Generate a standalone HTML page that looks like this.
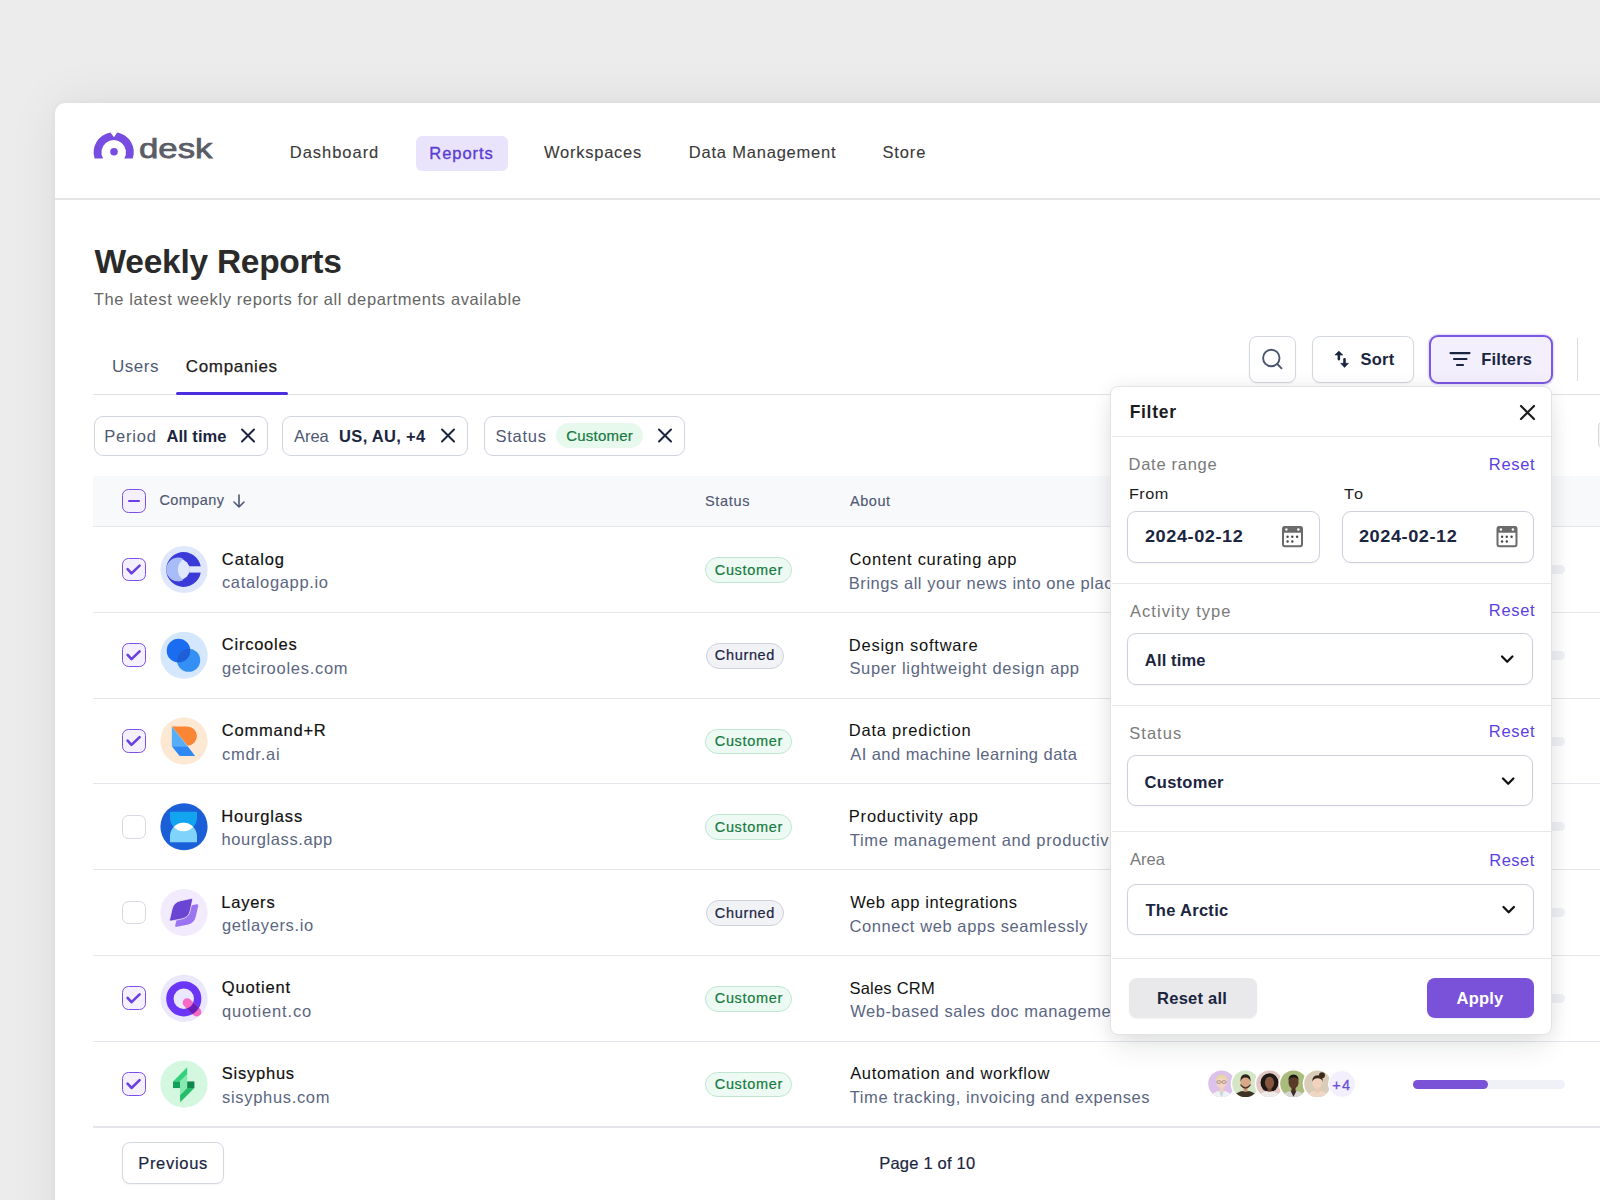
<!DOCTYPE html>
<html><head><meta charset="utf-8"><title>desk - Weekly Reports</title>
<style>
html,body{margin:0;padding:0;}
body{width:1600px;height:1200px;overflow:hidden;position:relative;background:#ececec;font-family:"Liberation Sans",sans-serif;}
.t{position:absolute;white-space:nowrap;font-family:"Liberation Sans",sans-serif;}
.r{position:absolute;display:block;}
</style></head><body>
<div class="r" style="left:55px;top:103px;width:1600px;height:1200px;background:#fff;border-top-left-radius:10px;box-shadow:0 0 50px rgba(0,0,0,0.075),0 0 6px rgba(0,0,0,0.04);"></div>
<div class="r" style="left:55px;top:198.3px;width:1545px;height:1.8px;background:#e5e5e5;"></div>
<svg class="r" style="left:92px;top:129px;overflow:visible;" width="45" height="33" viewBox="0 0 45 33"><g transform="translate(0.000,0.000)"><path d="M2.61,29.6 A20.1,20.1 0 0 1 18.4,3.47 L22,8.3 L25.3,3.52 A20.1,20.1 0 0 1 40.79,29.6 L32.26,29.6 A12.3,12.3 0 1 0 11.14,29.6 Z" fill="#774ce0"/><circle cx="22" cy="22.7" r="3.8" fill="#774ce0"/></g></svg>
<div class="t" style="left:139.07px;top:134.77px;font-size:27.8px;line-height:27.8px;font-weight:400;color:#5a5d66;letter-spacing:0.000px;transform:scaleX(1.25);transform-origin:0 0;-webkit-text-stroke:0.75px #5a5d66;">desk</div>
<div class="t" style="left:289.82px;top:144.03px;font-size:16.5px;line-height:16.5px;font-weight:400;color:#3a3a3a;letter-spacing:0.969px;-webkit-text-stroke:0.1px #3a3a3a;">Dashboard</div>
<div class="r" style="left:416px;top:136px;width:92px;height:35px;background:#e9e4fb;border-radius:6px;"></div>
<div class="t" style="left:429.32px;top:144.73px;font-size:16.5px;line-height:16.5px;font-weight:400;color:#5a3cd4;letter-spacing:0.958px;-webkit-text-stroke:0.35px #5a3cd4;">Reports</div>
<div class="t" style="left:544.10px;top:144.03px;font-size:16.5px;line-height:16.5px;font-weight:400;color:#3a3a3a;letter-spacing:0.747px;-webkit-text-stroke:0.1px #3a3a3a;">Workspaces</div>
<div class="t" style="left:688.83px;top:144.03px;font-size:16.5px;line-height:16.5px;font-weight:400;color:#3a3a3a;letter-spacing:0.789px;-webkit-text-stroke:0.1px #3a3a3a;">Data Management</div>
<div class="t" style="left:882.45px;top:144.03px;font-size:16.5px;line-height:16.5px;font-weight:400;color:#3a3a3a;letter-spacing:0.875px;-webkit-text-stroke:0.1px #3a3a3a;">Store</div>
<div class="t" style="left:94.60px;top:244.84px;font-size:33.5px;line-height:33.5px;font-weight:700;color:#2a2a2a;letter-spacing:-0.267px;">Weekly Reports</div>
<div class="t" style="left:93.83px;top:291.43px;font-size:16.5px;line-height:16.5px;font-weight:400;color:#666666;letter-spacing:0.605px;">The latest weekly reports for all departments available</div>
<div class="r" style="left:93px;top:394px;width:1507px;height:1px;background:#dfe1e7;"></div>
<div class="t" style="left:111.95px;top:358.21px;font-size:17px;line-height:17px;font-weight:400;color:#4f5a75;letter-spacing:0.550px;">Users</div>
<div class="t" style="left:185.82px;top:358.21px;font-size:17px;line-height:17px;font-weight:400;color:#1c1c1c;letter-spacing:0.662px;-webkit-text-stroke:0.25px #1c1c1c;">Companies</div>
<div class="r" style="left:176.4px;top:392.2px;width:112px;height:3px;background:#4a2ee0;border-radius:2px;"></div>
<div class="r" style="left:1248.5px;top:336px;width:47px;height:46.5px;background:#fff;border:1px solid #d3d7e0;border-radius:8px;box-sizing:border-box;box-shadow:0 1px 2px rgba(16,24,40,0.05);"></div>
<svg class="r" style="left:1260px;top:347px;overflow:visible;" width="25" height="25" viewBox="0 0 25 25"><g transform="translate(0.000,0.000)"><circle cx="11.3" cy="11" r="8.2" fill="none" stroke="#4a5570" stroke-width="1.9"/><path d="M17.3,17 L21.5,21.3" stroke="#4a5570" stroke-width="1.9" stroke-linecap="round"/></g></svg>
<div class="r" style="left:1312px;top:336px;width:101.5px;height:46.5px;background:#fff;border:1px solid #d3d7e0;border-radius:8px;box-sizing:border-box;box-shadow:0 1px 2px rgba(16,24,40,0.05);"></div>
<svg class="r" style="left:1333px;top:349px;overflow:visible;" width="19" height="21" viewBox="0 0 19 21"><g transform="translate(0.000,0.000)"><g fill="#1b2540"><path d="M5.85,2.1 L1.9,6 L9.8,6 Z" stroke="#1b2540" stroke-width="0.6" stroke-linejoin="round"/><rect x="4.6" y="5" width="2.5" height="6.4" rx="1.1"/><rect x="10.2" y="9" width="2.6" height="6" rx="1.1"/><path d="M7.7,14.3 L15.5,14.3 L11.5,18.4 Z" stroke="#1b2540" stroke-width="0.6" stroke-linejoin="round"/></g></g></svg>
<div class="t" style="left:1360.50px;top:351.03px;font-size:16.5px;line-height:16.5px;font-weight:700;color:#1b2540;letter-spacing:0.242px;">Sort</div>
<div class="r" style="left:1428.5px;top:334.5px;width:124px;height:49px;background:#f3effd;border:2px solid #7a58e2;border-radius:9px;box-sizing:border-box;box-shadow:0 0 0 1.5px #ece6fc;"></div>
<svg class="r" style="left:1448px;top:350px;overflow:visible;" width="25" height="19" viewBox="0 0 25 19"><g transform="translate(0.000,0.000)"><path d="M2.5,3.1 H21.5 M6,9 H18.5 M9,15 H15" stroke="#1b2540" stroke-width="2.2" stroke-linecap="round"/></g></svg>
<div class="t" style="left:1481.28px;top:351.03px;font-size:16.5px;line-height:16.5px;font-weight:700;color:#1b2540;letter-spacing:0.208px;">Filters</div>
<div class="r" style="left:1577px;top:338px;width:1px;height:43px;background:#dcdcdc;"></div>
<div class="r" style="left:93.5px;top:415.5px;width:174px;height:40px;background:#fff;border:1px solid #cfd4df;border-radius:9px;box-sizing:border-box;"></div>
<div class="t" style="left:104.22px;top:427.53px;font-size:16.5px;line-height:16.5px;font-weight:400;color:#4f5872;letter-spacing:0.790px;">Period</div>
<div class="t" style="left:166.43px;top:427.53px;font-size:16.5px;line-height:16.5px;font-weight:700;color:#1b2540;letter-spacing:0.068px;">All time</div>
<svg class="r" style="left:241px;top:428px;overflow:visible;" width="15" height="15" viewBox="0 0 15 15"><g transform="translate(0.000,0.500)"><path d="M1,1 L13,13 M13,1 L1,13" stroke="#1b2540" stroke-width="2" stroke-linecap="round"/></g></svg>
<div class="r" style="left:281.5px;top:415.5px;width:186.5px;height:40px;background:#fff;border:1px solid #cfd4df;border-radius:9px;box-sizing:border-box;"></div>
<div class="t" style="left:293.90px;top:427.53px;font-size:16.5px;line-height:16.5px;font-weight:400;color:#4f5872;letter-spacing:0.008px;">Area</div>
<div class="t" style="left:339.10px;top:427.53px;font-size:16.5px;line-height:16.5px;font-weight:700;color:#1b2540;letter-spacing:0.306px;">US, AU, +4</div>
<svg class="r" style="left:441px;top:428px;overflow:visible;" width="15" height="15" viewBox="0 0 15 15"><g transform="translate(0.000,0.500)"><path d="M1,1 L13,13 M13,1 L1,13" stroke="#1b2540" stroke-width="2" stroke-linecap="round"/></g></svg>
<div class="r" style="left:484px;top:415.5px;width:200.5px;height:40px;background:#fff;border:1px solid #cfd4df;border-radius:9px;box-sizing:border-box;"></div>
<div class="t" style="left:495.55px;top:427.53px;font-size:16.5px;line-height:16.5px;font-weight:400;color:#4f5872;letter-spacing:0.725px;">Status</div>
<div class="r" style="left:556.4px;top:422.8px;width:86.6px;height:25.5px;background:#e7f8ed;border-radius:13px;"></div>
<div class="t" style="left:566.15px;top:427.80px;font-size:15px;line-height:15px;font-weight:400;color:#167a3e;letter-spacing:0.229px;-webkit-text-stroke:0.2px #167a3e;">Customer</div>
<svg class="r" style="left:658px;top:428px;overflow:visible;" width="15" height="15" viewBox="0 0 15 15"><g transform="translate(0.000,0.500)"><path d="M1,1 L13,13 M13,1 L1,13" stroke="#1b2540" stroke-width="2" stroke-linecap="round"/></g></svg>
<div class="r" style="left:93px;top:476px;width:1507px;height:50px;background:#f8f9fb;"></div>
<div class="r" style="left:93px;top:526.1px;width:1507px;height:1px;background:#e4e6eb;"></div>
<div class="r" style="left:122px;top:489.2px;width:23.8px;height:23.8px;background:#f4f0fe;border:1.8px solid #7b4ee6;border-radius:6.5px;box-sizing:border-box;"></div>
<div class="r" style="left:127.8px;top:500px;width:12px;height:2.3px;background:#6a3fe0;border-radius:1.2px;"></div>
<div class="t" style="left:159.45px;top:493.43px;font-size:14.5px;line-height:14.5px;font-weight:400;color:#4f5872;letter-spacing:0.425px;-webkit-text-stroke:0.15px #4f5872;">Company</div>
<svg class="r" style="left:231px;top:493px;overflow:visible;" width="17" height="17" viewBox="0 0 17 17"><g transform="translate(0.000,0.000)"><path d="M8,2 V14 M3,9 L8,14 L13,9" fill="none" stroke="#4f5872" stroke-width="1.6" stroke-linecap="round" stroke-linejoin="round"/></g></svg>
<div class="t" style="left:704.98px;top:493.73px;font-size:14.5px;line-height:14.5px;font-weight:400;color:#4f5872;letter-spacing:0.680px;-webkit-text-stroke:0.15px #4f5872;">Status</div>
<div class="t" style="left:850.00px;top:493.73px;font-size:14.5px;line-height:14.5px;font-weight:400;color:#4f5872;letter-spacing:0.531px;-webkit-text-stroke:0.15px #4f5872;">About</div>
<div class="r" style="left:93px;top:611.86px;width:1507px;height:1px;background:#e4e6eb;"></div>
<div class="r" style="left:122px;top:557.58px;width:23.8px;height:23.8px;background:#f4f0fe;border:1.8px solid #7b4ee6;border-radius:6.5px;box-sizing:border-box;"></div>
<svg class="r" style="left:122px;top:557px;overflow:visible;" width="25" height="25" viewBox="0 0 25 25"><g transform="translate(0.000,0.580)"><path d="M5.6,11.6 L9.5,15.8 L17.6,8" fill="none" stroke="#6a3fe0" stroke-width="2.6" stroke-linecap="round" stroke-linejoin="round"/></g></svg>
<svg class="r" style="left:160px;top:545px;overflow:visible;" width="49" height="49" viewBox="0 0 49 49"><g transform="translate(0.000,0.480)"><circle cx="24" cy="24" r="23.6" fill="#dfe7fc"/><circle cx="23.6" cy="24" r="17.4" fill="#3a3ad8"/><circle cx="19.4" cy="24" r="10.4" fill="#dfe7fc"/><path d="M23.52,13.4 A11.9,11.9 0 1 0 23.52,34.6 A12.8,12.8 0 0 1 23.52,13.4 Z" fill="#a8bdf8"/><rect x="29.2" y="20.8" width="14" height="6.3" fill="#dfe7fc"/></g></svg>
<div class="t" style="left:221.85px;top:550.51px;font-size:16.5px;line-height:16.5px;font-weight:400;color:#111111;letter-spacing:0.879px;-webkit-text-stroke:0.2px #111;">Catalog</div>
<div class="t" style="left:221.97px;top:574.11px;font-size:16.5px;line-height:16.5px;font-weight:400;color:#5b6681;letter-spacing:0.652px;">catalogapp.io</div>
<div class="r" style="left:705.3px;top:557.18px;width:86.3px;height:25.6px;background:#edfaf3;border:1px solid #c0e6d2;border-radius:13px;box-sizing:border-box;"></div>
<div class="t" style="left:714.75px;top:562.51px;font-size:14.5px;line-height:14.5px;font-weight:400;color:#167a3e;letter-spacing:0.661px;-webkit-text-stroke:0.2px #167a3e;">Customer</div>
<div class="t" style="left:849.45px;top:550.91px;font-size:16.5px;line-height:16.5px;font-weight:400;color:#111111;letter-spacing:0.729px;">Content curating app</div>
<div class="t" style="left:848.83px;top:574.51px;font-size:16.5px;line-height:16.5px;font-weight:400;color:#5b6681;letter-spacing:0.539px;">Brings all your news into one place</div>
<div class="r" style="left:1413px;top:564.98px;width:152px;height:9px;background:#f0f1f6;border-radius:5px;"></div>
<div class="r" style="left:93px;top:697.62px;width:1507px;height:1px;background:#e4e6eb;"></div>
<div class="r" style="left:122px;top:643.34px;width:23.8px;height:23.8px;background:#f4f0fe;border:1.8px solid #7b4ee6;border-radius:6.5px;box-sizing:border-box;"></div>
<svg class="r" style="left:122px;top:643px;overflow:visible;" width="25" height="25" viewBox="0 0 25 25"><g transform="translate(0.000,0.340)"><path d="M5.6,11.6 L9.5,15.8 L17.6,8" fill="none" stroke="#6a3fe0" stroke-width="2.6" stroke-linecap="round" stroke-linejoin="round"/></g></svg>
<svg class="r" style="left:160px;top:631px;overflow:visible;" width="49" height="49" viewBox="0 0 49 49"><g transform="translate(0.000,0.240)"><circle cx="24" cy="24" r="23.6" fill="#d4e7fc"/><circle cx="18.5" cy="19.4" r="11.8" fill="#1a6cf0"/><circle cx="28.6" cy="29" r="11.6" fill="#3590f5"/><clipPath id="cc1"><circle cx="18.5" cy="19.4" r="11.8"/></clipPath><circle cx="28.6" cy="29" r="11.6" fill="#1e5ed8" clip-path="url(#cc1)"/></g></svg>
<div class="t" style="left:221.85px;top:636.27px;font-size:16.5px;line-height:16.5px;font-weight:400;color:#111111;letter-spacing:0.753px;-webkit-text-stroke:0.2px #111;">Circooles</div>
<div class="t" style="left:221.97px;top:659.87px;font-size:16.5px;line-height:16.5px;font-weight:400;color:#5b6681;letter-spacing:0.716px;">getcirooles.com</div>
<div class="r" style="left:705.5px;top:642.94px;width:78px;height:25.6px;background:#f1f2f6;border:1px solid #cfd2da;border-radius:13px;box-sizing:border-box;"></div>
<div class="t" style="left:714.85px;top:648.27px;font-size:14.5px;line-height:14.5px;font-weight:400;color:#1b2540;letter-spacing:0.654px;-webkit-text-stroke:0.2px #1b2540;">Churned</div>
<div class="t" style="left:848.83px;top:636.67px;font-size:16.5px;line-height:16.5px;font-weight:400;color:#111111;letter-spacing:0.754px;">Design software</div>
<div class="t" style="left:849.45px;top:660.27px;font-size:16.5px;line-height:16.5px;font-weight:400;color:#5b6681;letter-spacing:0.656px;">Super lightweight design app</div>
<div class="r" style="left:1413px;top:650.74px;width:152px;height:9px;background:#f0f1f6;border-radius:5px;"></div>
<div class="r" style="left:93px;top:783.38px;width:1507px;height:1px;background:#e4e6eb;"></div>
<div class="r" style="left:122px;top:729.1px;width:23.8px;height:23.8px;background:#f4f0fe;border:1.8px solid #7b4ee6;border-radius:6.5px;box-sizing:border-box;"></div>
<svg class="r" style="left:122px;top:729px;overflow:visible;" width="25" height="25" viewBox="0 0 25 25"><g transform="translate(0.000,0.100)"><path d="M5.6,11.6 L9.5,15.8 L17.6,8" fill="none" stroke="#6a3fe0" stroke-width="2.6" stroke-linecap="round" stroke-linejoin="round"/></g></svg>
<svg class="r" style="left:160px;top:717px;overflow:visible;" width="49" height="49" viewBox="0 0 49 49"><g transform="translate(0.000,0.000)"><circle cx="24" cy="24" r="23.6" fill="#fde8d3"/><path d="M11.8,9.4 L26.7,9.4 A9.7,9.7 0 0 1 27.7,28.8 Z" fill="#fa8535"/><path d="M11.8,9.4 L11.8,29.2 L27.7,29.2 Z" fill="#57aef8"/><path d="M11.8,29.2 L27.7,29.2 L35.1,39 L19.7,39 Z" fill="#2f89f5"/></g></svg>
<div class="t" style="left:221.85px;top:722.03px;font-size:16.5px;line-height:16.5px;font-weight:400;color:#111111;letter-spacing:0.784px;-webkit-text-stroke:0.2px #111;">Command+R</div>
<div class="t" style="left:221.97px;top:745.63px;font-size:16.5px;line-height:16.5px;font-weight:400;color:#5b6681;letter-spacing:0.733px;">cmdr.ai</div>
<div class="r" style="left:705.3px;top:728.7px;width:86.3px;height:25.6px;background:#edfaf3;border:1px solid #c0e6d2;border-radius:13px;box-sizing:border-box;"></div>
<div class="t" style="left:714.75px;top:734.03px;font-size:14.5px;line-height:14.5px;font-weight:400;color:#167a3e;letter-spacing:0.661px;-webkit-text-stroke:0.2px #167a3e;">Customer</div>
<div class="t" style="left:848.83px;top:722.43px;font-size:16.5px;line-height:16.5px;font-weight:400;color:#111111;letter-spacing:0.771px;">Data prediction</div>
<div class="t" style="left:850.20px;top:746.03px;font-size:16.5px;line-height:16.5px;font-weight:400;color:#5b6681;letter-spacing:0.450px;">AI and machine learning data</div>
<div class="r" style="left:1413px;top:736.5px;width:152px;height:9px;background:#f0f1f6;border-radius:5px;"></div>
<div class="r" style="left:93px;top:869.14px;width:1507px;height:1px;background:#e4e6eb;"></div>
<div class="r" style="left:122px;top:814.86px;width:23.8px;height:23.8px;background:#fff;border:1.5px solid #d5d8e0;border-radius:6.5px;box-sizing:border-box;"></div>
<svg class="r" style="left:160px;top:802px;overflow:visible;" width="49" height="49" viewBox="0 0 49 49"><g transform="translate(0.000,0.760)"><circle cx="24" cy="24" r="23.6" fill="#1b5fd8"/><path d="M10,9 H37 V15 A13.5,13.5 0 0 1 10,15 Z" fill="#13a4ef"/><path d="M10,39.4 V33.5 A13.5,13.5 0 0 1 37,33.5 V39.4 Z" fill="#80d4fb"/><path d="M13.67,24.25 A13.5,13.5 0 0 1 33.33,24.25 A13.5,13.5 0 0 1 13.67,24.25 Z" fill="#fff"/></g></svg>
<div class="t" style="left:221.22px;top:807.79px;font-size:16.5px;line-height:16.5px;font-weight:400;color:#111111;letter-spacing:0.831px;-webkit-text-stroke:0.2px #111;">Hourglass</div>
<div class="t" style="left:221.47px;top:831.39px;font-size:16.5px;line-height:16.5px;font-weight:400;color:#5b6681;letter-spacing:0.585px;">hourglass.app</div>
<div class="r" style="left:705.3px;top:814.46px;width:86.3px;height:25.6px;background:#edfaf3;border:1px solid #c0e6d2;border-radius:13px;box-sizing:border-box;"></div>
<div class="t" style="left:714.75px;top:819.79px;font-size:14.5px;line-height:14.5px;font-weight:400;color:#167a3e;letter-spacing:0.661px;-webkit-text-stroke:0.2px #167a3e;">Customer</div>
<div class="t" style="left:848.83px;top:808.19px;font-size:16.5px;line-height:16.5px;font-weight:400;color:#111111;letter-spacing:0.788px;">Productivity app</div>
<div class="t" style="left:849.83px;top:831.79px;font-size:16.5px;line-height:16.5px;font-weight:400;color:#5b6681;letter-spacing:0.645px;">Time management and productivity</div>
<div class="r" style="left:1413px;top:822.26px;width:152px;height:9px;background:#f0f1f6;border-radius:5px;"></div>
<div class="r" style="left:93px;top:954.9px;width:1507px;height:1px;background:#e4e6eb;"></div>
<div class="r" style="left:122px;top:900.62px;width:23.8px;height:23.8px;background:#fff;border:1.5px solid #d5d8e0;border-radius:6.5px;box-sizing:border-box;"></div>
<svg class="r" style="left:160px;top:888px;overflow:visible;" width="49" height="49" viewBox="0 0 49 49"><g transform="translate(0.000,0.520)"><circle cx="24" cy="24" r="23.6" fill="#f2eafd"/><path d="M17.7,26.26 Q19.3,19.4 26.16,17.98 L36.64,15.81 Q38.6,15.4 38.14,17.36 L35.8,27.94 Q34.2,34.8 27.34,36.22 L16.76,38.29 Q14.8,38.7 15.26,36.74 Z" fill="#9b74f2"/><path d="M12.1,20.46 Q13.7,13.6 20.56,12.18 L31.04,10.01 Q33,9.6 32.54,11.56 L30.2,22.14 Q28.6,29 21.74,30.42 L11.16,32.49 Q9.2,32.9 9.66,30.94 Z" fill="#6a44d2" stroke="#f2eafd" stroke-width="0.8"/></g></svg>
<div class="t" style="left:221.22px;top:893.55px;font-size:16.5px;line-height:16.5px;font-weight:400;color:#111111;letter-spacing:0.780px;-webkit-text-stroke:0.2px #111;">Layers</div>
<div class="t" style="left:221.97px;top:917.15px;font-size:16.5px;line-height:16.5px;font-weight:400;color:#5b6681;letter-spacing:0.616px;">getlayers.io</div>
<div class="r" style="left:705.5px;top:900.22px;width:78px;height:25.6px;background:#f1f2f6;border:1px solid #cfd2da;border-radius:13px;box-sizing:border-box;"></div>
<div class="t" style="left:714.85px;top:905.55px;font-size:14.5px;line-height:14.5px;font-weight:400;color:#1b2540;letter-spacing:0.654px;-webkit-text-stroke:0.2px #1b2540;">Churned</div>
<div class="t" style="left:850.20px;top:893.95px;font-size:16.5px;line-height:16.5px;font-weight:400;color:#111111;letter-spacing:0.589px;">Web app integrations</div>
<div class="t" style="left:849.45px;top:917.55px;font-size:16.5px;line-height:16.5px;font-weight:400;color:#5b6681;letter-spacing:0.587px;">Connect web apps seamlessly</div>
<div class="r" style="left:1413px;top:908.02px;width:152px;height:9px;background:#f0f1f6;border-radius:5px;"></div>
<div class="r" style="left:93px;top:1040.66px;width:1507px;height:1px;background:#e4e6eb;"></div>
<div class="r" style="left:122px;top:986.38px;width:23.8px;height:23.8px;background:#f4f0fe;border:1.8px solid #7b4ee6;border-radius:6.5px;box-sizing:border-box;"></div>
<svg class="r" style="left:122px;top:986px;overflow:visible;" width="25" height="25" viewBox="0 0 25 25"><g transform="translate(0.000,0.380)"><path d="M5.6,11.6 L9.5,15.8 L17.6,8" fill="none" stroke="#6a3fe0" stroke-width="2.6" stroke-linecap="round" stroke-linejoin="round"/></g></svg>
<svg class="r" style="left:160px;top:974px;overflow:visible;" width="49" height="49" viewBox="0 0 49 49"><g transform="translate(0.000,0.280)"><circle cx="24" cy="24" r="23.6" fill="#ebe7fc"/><circle cx="23.8" cy="24.5" r="13.9" fill="none" stroke="#6a35f5" stroke-width="7.4"/><path d="M27.2,28.4 L36.8,37.7" stroke="#f56ac4" stroke-width="9" stroke-linecap="round"/><clipPath id="qc1"><path d="M23.8,6.9 A17.6,17.6 0 1 1 23.79,6.9 Z M23.8,14.3 A10.2,10.2 0 1 0 23.81,14.3 Z" clip-rule="evenodd" fill-rule="evenodd"/></clipPath><path d="M27.2,28.4 L36.8,37.7" stroke="#6a1cb6" stroke-width="9" stroke-linecap="round" clip-path="url(#qc1)"/></g></svg>
<div class="t" style="left:221.85px;top:979.31px;font-size:16.5px;line-height:16.5px;font-weight:400;color:#111111;letter-spacing:0.843px;-webkit-text-stroke:0.2px #111;">Quotient</div>
<div class="t" style="left:221.97px;top:1002.91px;font-size:16.5px;line-height:16.5px;font-weight:400;color:#5b6681;letter-spacing:0.853px;">quotient.co</div>
<div class="r" style="left:705.3px;top:985.98px;width:86.3px;height:25.6px;background:#edfaf3;border:1px solid #c0e6d2;border-radius:13px;box-sizing:border-box;"></div>
<div class="t" style="left:714.75px;top:991.31px;font-size:14.5px;line-height:14.5px;font-weight:400;color:#167a3e;letter-spacing:0.661px;-webkit-text-stroke:0.2px #167a3e;">Customer</div>
<div class="t" style="left:849.45px;top:979.71px;font-size:16.5px;line-height:16.5px;font-weight:400;color:#111111;letter-spacing:0.228px;">Sales CRM</div>
<div class="t" style="left:850.20px;top:1003.31px;font-size:16.5px;line-height:16.5px;font-weight:400;color:#5b6681;letter-spacing:0.553px;">Web-based sales doc management</div>
<div class="r" style="left:1413px;top:993.78px;width:152px;height:9px;background:#f0f1f6;border-radius:5px;"></div>
<div class="r" style="left:93px;top:1126.42px;width:1507px;height:1px;background:#e4e6eb;"></div>
<div class="r" style="left:122px;top:1072.14px;width:23.8px;height:23.8px;background:#f4f0fe;border:1.8px solid #7b4ee6;border-radius:6.5px;box-sizing:border-box;"></div>
<svg class="r" style="left:122px;top:1072px;overflow:visible;" width="25" height="25" viewBox="0 0 25 25"><g transform="translate(0.000,0.140)"><path d="M5.6,11.6 L9.5,15.8 L17.6,8" fill="none" stroke="#6a3fe0" stroke-width="2.6" stroke-linecap="round" stroke-linejoin="round"/></g></svg>
<svg class="r" style="left:160px;top:1060px;overflow:visible;" width="49" height="49" viewBox="0 0 49 49"><g transform="translate(0.000,0.040)"><circle cx="24" cy="24" r="23.6" fill="#d3f8df"/><path d="M13,21.4 L27.2,7.2 L27.2,14.2 L20,21.4 Z" fill="#33d17e"/><rect x="13" y="21.4" width="7" height="6.6" fill="#149f58"/><path d="M20,21.4 L27.2,14.2 L27.2,28 L20,35.2 Z" fill="#86e9b0"/><rect x="27.2" y="21.4" width="7.2" height="6.6" fill="#0e8748"/><path d="M20,35.2 L27.2,28 L34.4,28 L20.2,42.2 Z" fill="#25bd6c"/></g></svg>
<div class="t" style="left:221.85px;top:1065.07px;font-size:16.5px;line-height:16.5px;font-weight:400;color:#111111;letter-spacing:0.754px;-webkit-text-stroke:0.2px #111;">Sisyphus</div>
<div class="t" style="left:222.10px;top:1088.67px;font-size:16.5px;line-height:16.5px;font-weight:400;color:#5b6681;letter-spacing:0.673px;">sisyphus.com</div>
<div class="r" style="left:705.3px;top:1071.74px;width:86.3px;height:25.6px;background:#edfaf3;border:1px solid #c0e6d2;border-radius:13px;box-sizing:border-box;"></div>
<div class="t" style="left:714.75px;top:1077.07px;font-size:14.5px;line-height:14.5px;font-weight:400;color:#167a3e;letter-spacing:0.661px;-webkit-text-stroke:0.2px #167a3e;">Customer</div>
<div class="t" style="left:850.20px;top:1065.47px;font-size:16.5px;line-height:16.5px;font-weight:400;color:#111111;letter-spacing:0.674px;">Automation and workflow</div>
<div class="t" style="left:849.83px;top:1089.07px;font-size:16.5px;line-height:16.5px;font-weight:400;color:#5b6681;letter-spacing:0.574px;">Time tracking, invoicing and expenses</div>
<div class="r" style="left:1413px;top:1079.54px;width:152px;height:9px;background:#f0f1f6;border-radius:5px;"></div>
<div class="r" style="left:1413px;top:1079.54px;width:75px;height:9px;background:#7a52d8;border-radius:5px;"></div>
<svg class="r" style="left:1207px;top:1069px;overflow:visible;" width="29" height="29" viewBox="0 0 29 29"><g transform="translate(0.500,0.740)"><clipPath id="av0"><circle cx="14" cy="14" r="13.3"/></clipPath><circle cx="14" cy="14" r="14.8" fill="#fff"/><g clip-path="url(#av0)"><rect width="28" height="28" fill="#dcc1ea"/><ellipse cx="14" cy="29" rx="11" ry="8" fill="#eef2f4"/><path d="M12,22 L14,28 L16,22 Z" fill="#c9d3da"/><rect x="12" y="17" width="4" height="5" fill="#efcfb8"/><ellipse cx="14" cy="12.5" rx="5" ry="6.2" fill="#f3d6c2"/><path d="M8.6,12 Q8,5 14,5 Q20,5 19.6,12 Q18,8 14,8 Q10,8 8.6,12 Z" fill="#e8d7a0"/><g fill="none" stroke="#7a6a5a" stroke-width="0.6"><rect x="9.6" y="11" width="3.8" height="2.6" rx="1"/><rect x="14.6" y="11" width="3.8" height="2.6" rx="1"/></g></g></g></svg>
<svg class="r" style="left:1231px;top:1069px;overflow:visible;" width="29" height="29" viewBox="0 0 29 29"><g transform="translate(0.500,0.740)"><clipPath id="av1"><circle cx="14" cy="14" r="13.3"/></clipPath><circle cx="14" cy="14" r="14.8" fill="#fff"/><g clip-path="url(#av1)"><rect width="28" height="28" fill="#d4e6c6"/><ellipse cx="14" cy="29" rx="12" ry="8" fill="#3f3326"/><rect x="12" y="17" width="4" height="5" fill="#c99878"/><ellipse cx="14" cy="12.5" rx="5" ry="6.3" fill="#d9a888"/><path d="M9,14 Q14,21 19,14 L19,16 Q14,22 9,16 Z" fill="#4a3326"/><path d="M8.8,12 Q8.5,4.5 14,4.5 Q19.5,4.5 19.2,12 Q18,8 14,7.8 Q10,8 8.8,12 Z" fill="#2e231c"/></g></g></svg>
<svg class="r" style="left:1255px;top:1069px;overflow:visible;" width="29" height="29" viewBox="0 0 29 29"><g transform="translate(0.500,0.740)"><clipPath id="av2"><circle cx="14" cy="14" r="13.3"/></clipPath><circle cx="14" cy="14" r="14.8" fill="#fff"/><g clip-path="url(#av2)"><rect width="28" height="28" fill="#e2c6c2"/><ellipse cx="14" cy="13" rx="9" ry="9.5" fill="#1f1916"/><ellipse cx="14" cy="29" rx="11" ry="8" fill="#eeebe8"/><rect x="12" y="17" width="4" height="5" fill="#6f4632"/><ellipse cx="14" cy="13" rx="4.6" ry="6" fill="#855640"/></g></g></svg>
<svg class="r" style="left:1279px;top:1069px;overflow:visible;" width="29" height="29" viewBox="0 0 29 29"><g transform="translate(0.500,0.740)"><clipPath id="av3"><circle cx="14" cy="14" r="13.3"/></clipPath><circle cx="14" cy="14" r="14.8" fill="#fff"/><g clip-path="url(#av3)"><rect width="28" height="28" fill="#a9bc7c"/><ellipse cx="14" cy="29" rx="12" ry="8" fill="#d8d6d2"/><path d="M11,21 L14,27 L17,21 Z" fill="#3a2c24"/><rect x="12" y="17" width="4" height="5" fill="#4a3022"/><ellipse cx="14" cy="12.5" rx="5" ry="6.3" fill="#5a3a28"/><path d="M8.8,11 Q9,4.8 14,4.8 Q19,4.8 19.2,11 Q18,7.5 14,7.5 Q10,7.5 8.8,11 Z" fill="#1d1613"/></g></g></svg>
<svg class="r" style="left:1303px;top:1069px;overflow:visible;" width="29" height="29" viewBox="0 0 29 29"><g transform="translate(0.500,0.740)"><clipPath id="av4"><circle cx="14" cy="14" r="13.3"/></clipPath><circle cx="14" cy="14" r="14.8" fill="#fff"/><g clip-path="url(#av4)"><rect width="28" height="28" fill="#d9cdb9"/><ellipse cx="14" cy="29" rx="12" ry="8" fill="#f0d6c4"/><rect x="12" y="17" width="4" height="6" fill="#ebcab2"/><ellipse cx="13.5" cy="13" rx="4.8" ry="6.2" fill="#f2d2bc"/><circle cx="18.5" cy="5.5" r="3" fill="#3b2a20"/><path d="M8.8,12 Q8.6,5.5 14,5.5 Q19.4,5.5 19.4,12 Q18.5,8.5 14,8.5 Q10,8.5 8.8,12 Z" fill="#3b2a20"/></g></g></svg>
<div class="r" style="left:1327.5px;top:1069.74px;width:28px;height:28px;background:#f3effc;border-radius:50%;border:1.5px solid #fff;box-sizing:border-box;"></div>
<div class="t" style="left:1332.17px;top:1077.97px;font-size:14.5px;line-height:14.5px;font-weight:400;color:#6a4fd6;letter-spacing:1.500px;-webkit-text-stroke:0.3px #6a4fd6;">+4</div>
<div class="r" style="left:93px;top:1126.5px;width:1507px;height:1px;background:#e4e6eb;"></div>
<div class="r" style="left:122px;top:1142.3px;width:101.5px;height:42px;background:#fff;border:1px solid #d3d7e0;border-radius:8px;box-sizing:border-box;box-shadow:0 1px 2px rgba(16,24,40,0.05);"></div>
<div class="t" style="left:138.22px;top:1154.83px;font-size:16.5px;line-height:16.5px;font-weight:400;color:#1b2540;letter-spacing:0.693px;-webkit-text-stroke:0.2px #1b2540;">Previous</div>
<div class="t" style="left:879.23px;top:1154.73px;font-size:16.5px;line-height:16.5px;font-weight:400;color:#1b2540;letter-spacing:0.216px;-webkit-text-stroke:0.2px #1b2540;">Page 1 of 10</div>
<div class="r" style="left:1598px;top:419.5px;width:20px;height:30px;background:#f7f7f7;border:1.5px solid #d6d6d6;border-radius:7px;box-sizing:border-box;"></div>
<div class="r" style="left:1110px;top:386px;width:442px;height:649px;background:#fff;border:1px solid #e3e3e5;border-radius:8px;box-sizing:border-box;box-shadow:0 0 18px rgba(0,0,0,0.07),0 16px 30px -6px rgba(16,24,40,0.11);"></div>
<div class="t" style="left:1129.67px;top:403.99px;font-size:17.5px;line-height:17.5px;font-weight:700;color:#1c1c1c;letter-spacing:0.700px;">Filter</div>
<svg class="r" style="left:1520px;top:405px;overflow:visible;" width="16" height="16" viewBox="0 0 16 16"><g transform="translate(0.000,0.000)"><path d="M1,1 L14,14 M14,1 L1,14" stroke="#1c1c1c" stroke-width="2.2" stroke-linecap="round"/></g></svg>
<div class="r" style="left:1112px;top:435.5px;width:439px;height:1px;background:#e8e8ea;"></div>
<div class="t" style="left:1128.62px;top:455.83px;font-size:16.5px;line-height:16.5px;font-weight:400;color:#7a7a7a;letter-spacing:0.708px;">Date range</div>
<div class="t" style="left:1488.83px;top:455.83px;font-size:16.5px;line-height:16.5px;font-weight:400;color:#5b3fe2;letter-spacing:0.694px;">Reset</div>
<div class="t" style="left:1128.75px;top:486.38px;font-size:15.5px;line-height:15.5px;font-weight:400;color:#1c1c1c;letter-spacing:0.454px;transform:scaleX(1.05);transform-origin:1.25px 0;">From</div>
<div class="t" style="left:1344.12px;top:486.38px;font-size:15.5px;line-height:15.5px;font-weight:400;color:#1c1c1c;letter-spacing:1.768px;transform:scaleX(1.05);transform-origin:0.38px 0;">To</div>
<div class="r" style="left:1127px;top:511px;width:192.5px;height:51.5px;background:#fff;border:1px solid #cbd0dc;border-radius:9px;box-sizing:border-box;box-shadow:0 1px 2px rgba(16,24,40,0.04);"></div>
<div class="t" style="left:1144.90px;top:528.23px;font-size:16.5px;line-height:16.5px;font-weight:700;color:#1b2540;letter-spacing:0.508px;transform:scaleX(1.1);transform-origin:0.50px 0;">2024-02-12</div>
<svg class="r" style="left:1282px;top:525px;overflow:visible;" width="22" height="23" viewBox="0 0 22 23"><g transform="translate(0.000,0.500)"><rect x="1" y="1.5" width="19" height="19.2" rx="2" fill="none" stroke="#6b6b6b" stroke-width="2"/><rect x="0.5" y="0.8" width="20" height="6.4" rx="2" fill="#6b6b6b"/><circle cx="4.4" cy="4" r="1.2" fill="#fff"/><circle cx="16.4" cy="4" r="1.2" fill="#fff"/><g fill="#454545"><circle cx="5.6" cy="11.2" r="1.2"/><circle cx="10.3" cy="11.2" r="1.2"/><circle cx="15.1" cy="11.2" r="1.2"/><circle cx="5.6" cy="16" r="1.2"/><circle cx="10.3" cy="16" r="1.2"/></g></g></svg>
<div class="r" style="left:1341.5px;top:511px;width:192.5px;height:51.5px;background:#fff;border:1px solid #cbd0dc;border-radius:9px;box-sizing:border-box;box-shadow:0 1px 2px rgba(16,24,40,0.04);"></div>
<div class="t" style="left:1359.40px;top:528.23px;font-size:16.5px;line-height:16.5px;font-weight:700;color:#1b2540;letter-spacing:0.508px;transform:scaleX(1.1);transform-origin:0.50px 0;">2024-02-12</div>
<svg class="r" style="left:1496px;top:525px;overflow:visible;" width="22" height="23" viewBox="0 0 22 23"><g transform="translate(0.500,0.500)"><rect x="1" y="1.5" width="19" height="19.2" rx="2" fill="none" stroke="#6b6b6b" stroke-width="2"/><rect x="0.5" y="0.8" width="20" height="6.4" rx="2" fill="#6b6b6b"/><circle cx="4.4" cy="4" r="1.2" fill="#fff"/><circle cx="16.4" cy="4" r="1.2" fill="#fff"/><g fill="#454545"><circle cx="5.6" cy="11.2" r="1.2"/><circle cx="10.3" cy="11.2" r="1.2"/><circle cx="15.1" cy="11.2" r="1.2"/><circle cx="5.6" cy="16" r="1.2"/><circle cx="10.3" cy="16" r="1.2"/></g></g></svg>
<div class="r" style="left:1112px;top:583px;width:439px;height:1px;background:#e8e8ea;"></div>
<div class="t" style="left:1130.00px;top:603.13px;font-size:16.5px;line-height:16.5px;font-weight:400;color:#7a7a7a;letter-spacing:1.035px;">Activity type</div>
<div class="t" style="left:1488.83px;top:602.03px;font-size:16.5px;line-height:16.5px;font-weight:400;color:#5b3fe2;letter-spacing:0.694px;">Reset</div>
<div class="r" style="left:1127.4px;top:633.4px;width:406.1px;height:52.1px;background:#fff;border:1px solid #cbd0dc;border-radius:9px;box-sizing:border-box;box-shadow:0 1px 2px rgba(16,24,40,0.04);"></div>
<div class="t" style="left:1144.83px;top:651.83px;font-size:16.5px;line-height:16.5px;font-weight:700;color:#1b2540;letter-spacing:0.154px;">All time</div>
<svg class="r" style="left:1500px;top:654px;overflow:visible;" width="16" height="11" viewBox="0 0 16 11"><g transform="translate(0.000,0.000)"><path d="M2,2.5 L7.2,7.7 L12.4,2.5" fill="none" stroke="#111" stroke-width="2.3" stroke-linecap="round" stroke-linejoin="round"/></g></svg>
<div class="r" style="left:1112px;top:705px;width:439px;height:1px;background:#e8e8ea;"></div>
<div class="t" style="left:1129.25px;top:724.93px;font-size:16.5px;line-height:16.5px;font-weight:400;color:#7a7a7a;letter-spacing:1.025px;">Status</div>
<div class="t" style="left:1488.83px;top:722.93px;font-size:16.5px;line-height:16.5px;font-weight:400;color:#5b3fe2;letter-spacing:0.694px;">Reset</div>
<div class="r" style="left:1127.4px;top:755.2px;width:406.1px;height:51.2px;background:#fff;border:1px solid #cbd0dc;border-radius:9px;box-sizing:border-box;box-shadow:0 1px 2px rgba(16,24,40,0.04);"></div>
<div class="t" style="left:1144.58px;top:773.53px;font-size:16.5px;line-height:16.5px;font-weight:700;color:#1b2540;letter-spacing:0.279px;">Customer</div>
<svg class="r" style="left:1501px;top:776px;overflow:visible;" width="16" height="11" viewBox="0 0 16 11"><g transform="translate(0.000,0.000)"><path d="M2,2.5 L7.2,7.7 L12.4,2.5" fill="none" stroke="#111" stroke-width="2.3" stroke-linecap="round" stroke-linejoin="round"/></g></svg>
<div class="r" style="left:1112px;top:830.5px;width:439px;height:1px;background:#e8e8ea;"></div>
<div class="t" style="left:1130.00px;top:850.73px;font-size:16.5px;line-height:16.5px;font-weight:400;color:#7a7a7a;letter-spacing:0.042px;">Area</div>
<div class="t" style="left:1489.33px;top:852.13px;font-size:16.5px;line-height:16.5px;font-weight:400;color:#5b3fe2;letter-spacing:0.469px;">Reset</div>
<div class="r" style="left:1127.3px;top:883.7px;width:406.3px;height:51.5px;background:#fff;border:1px solid #cbd0dc;border-radius:9px;box-sizing:border-box;box-shadow:0 1px 2px rgba(16,24,40,0.04);"></div>
<div class="t" style="left:1145.38px;top:902.13px;font-size:16.5px;line-height:16.5px;font-weight:700;color:#1b2540;letter-spacing:0.311px;">The Arctic</div>
<svg class="r" style="left:1501px;top:904px;overflow:visible;" width="16" height="11" viewBox="0 0 16 11"><g transform="translate(0.500,0.500)"><path d="M2,2.5 L7.2,7.7 L12.4,2.5" fill="none" stroke="#111" stroke-width="2.3" stroke-linecap="round" stroke-linejoin="round"/></g></svg>
<div class="r" style="left:1112px;top:957.5px;width:439px;height:1px;background:#e8e8ea;"></div>
<div class="r" style="left:1128.5px;top:978px;width:128px;height:39.5px;background:#e9e9eb;border-radius:8px;box-shadow:0 1px 2px rgba(16,24,40,0.06);"></div>
<div class="t" style="left:1157.08px;top:990.23px;font-size:16.5px;line-height:16.5px;font-weight:700;color:#1b2540;letter-spacing:0.234px;">Reset all</div>
<div class="r" style="left:1427px;top:977.8px;width:107px;height:40px;background:#7a52d9;border-radius:8px;box-shadow:0 1px 2px rgba(16,24,40,0.08);"></div>
<div class="t" style="left:1456.62px;top:990.23px;font-size:16.5px;line-height:16.5px;font-weight:700;color:#ffffff;letter-spacing:0.156px;">Apply</div>
</body></html>
